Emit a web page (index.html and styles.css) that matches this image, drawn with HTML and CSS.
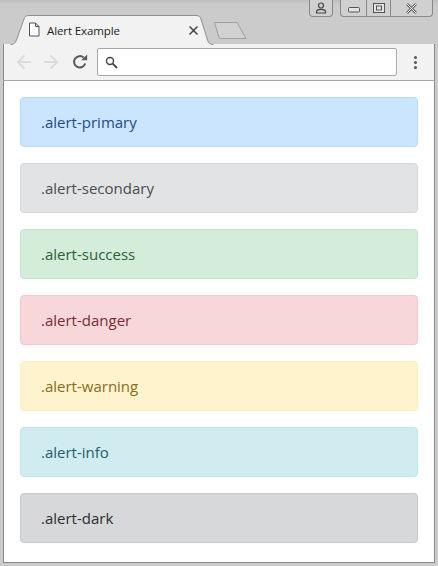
FILE: index.html
```html
<!DOCTYPE html>
<html lang="en">
<head>
<meta charset="utf-8">
<title>Alert Example</title>
<link rel="stylesheet" href="styles.css">
</head>
<body>
<div class="window">
  <div class="titlebar">
    <div class="tab">
      <svg class="tab-shape" width="204" height="30" viewBox="0 0 204 30"><path d="M0.5 29.5 C4 29.5 5 28 6.5 25 L14 4 C15 1.5 16 0.5 19 0.5 H186 C189 0.5 190 1.5 191 4 L197.5 25 C198.5 28 200 29.5 203.5 29.5" fill="#f2f2f2" stroke="#8f8f8f"/></svg>
      <svg class="tab-page" width="12" height="15" viewBox="0 0 12 15"><path d="M1.5 1 H7.5 L11 4.5 V14 H1.5 Z M7.5 1 V4.5 H11" fill="#fff" stroke="#555" stroke-width="1"/></svg>
      <span class="tab-title">Alert Example</span>
      <svg class="tab-close" width="9" height="9" viewBox="0 0 9 9"><path d="M0.5 0.5 L8.5 8.5 M8.5 0.5 L0.5 8.5" stroke="#444" stroke-width="1.5"/></svg>
    </div>
    <svg class="newtab" width="36" height="18" viewBox="0 0 36 18"><path d="M1.5 0.5 H24 L33 16.5 H8 C7 16.5 6.5 16 6 15.5 Z" fill="#d2d2d2" stroke="#a0a0a0"/></svg>
    <div class="controls">
      <div class="ctl ctl-user">
        <svg width="12" height="12" viewBox="0 0 12 12"><circle cx="6" cy="3.5" r="2.5" fill="none" stroke="#444" stroke-width="1.2"/><path d="M1.5 11 V9.5 C1.5 8 3 7.3 6 7.3 C9 7.3 10.5 8 10.5 9.5 V11 Z" fill="none" stroke="#444" stroke-width="1.2"/></svg>
      </div>
      <div class="ctl-group">
        <div class="ctl ctl-min"><svg width="12" height="6" viewBox="0 0 12 6"><rect x="0.5" y="0.5" width="11" height="4.5" rx="1" fill="#e4e4e4" stroke="#555"/></svg></div>
        <div class="ctl ctl-max"><svg width="12" height="10" viewBox="0 0 12 10"><rect x="0.5" y="0.5" width="11" height="9" fill="#e4e4e4" stroke="#555"/><rect x="3.5" y="3" width="5" height="4" fill="#e4e4e4" stroke="#555"/></svg></div>
        <div class="ctl ctl-close"><svg width="13" height="11" viewBox="0 0 13 11"><path d="M2 1 L11 10 M11 1 L2 10" stroke="#666" stroke-width="2.6"/><path d="M2 1 L11 10 M11 1 L2 10" stroke="#eee" stroke-width="1"/></svg></div>
      </div>
    </div>
  </div>
  <div class="toolbar">
    <svg class="nav" width="15" height="16" viewBox="0 0 15 16"><path d="M15 8 H2 M8.5 1.5 L2 8 L8.5 14.5" fill="none" stroke="#dcdcdc" stroke-width="2"/></svg>
    <svg class="nav" width="15" height="16" viewBox="0 0 15 16"><path d="M0 8 H13 M6.5 1.5 L13 8 L6.5 14.5" fill="none" stroke="#dcdcdc" stroke-width="2"/></svg>
    <svg class="nav" width="16" height="16" viewBox="0 0 16 16"><path d="M13.2 9.5 A5.7 5.7 0 1 1 11.6 3.6" fill="none" stroke="#5a5a5a" stroke-width="2"/><path d="M9.2 6.2 H15.2 V0.4 Z" fill="#5a5a5a"/></svg>
    <div class="omnibox">
      <svg width="13" height="13" viewBox="0 0 13 13"><circle cx="5" cy="5" r="3.5" fill="none" stroke="#444" stroke-width="1.4"/><path d="M7.7 7.7 L12 12" stroke="#444" stroke-width="1.8"/></svg>
    </div>
    <div class="menu"><i></i><i></i><i></i></div>
  </div>
  <main class="page">
    <div class="alert alert-primary">.alert-primary</div>
    <div class="alert alert-secondary">.alert-secondary</div>
    <div class="alert alert-success">.alert-success</div>
    <div class="alert alert-danger">.alert-danger</div>
    <div class="alert alert-warning">.alert-warning</div>
    <div class="alert alert-info">.alert-info</div>
    <div class="alert alert-dark">.alert-dark</div>
  </main>
</div>
</body>
</html>
```
FILE: styles.css
```css
* { box-sizing: border-box; }
html, body { margin: 0; height: 100%; }
body { background: #cbcbcb; overflow: hidden; font-family: "Open Sans", "Noto Sans", sans-serif; }
.window { width: 438px; height: 566px; display: flex; flex-direction: column; padding: 0 3px 3px 3px; }
.titlebar { height: 44px; display: flex; align-items: flex-start; position: relative; flex: none; background: linear-gradient(#bdbdbd 0, #c8c8c8 3px, #cbcbcb 6px); margin: 0 -3px; padding-left: 10px; }
.tab { position: relative; width: 204px; height: 30px; margin-top: 15px; flex: none; display: flex; align-items: center; padding: 0 15px 0 18px; z-index: 1; }
.tab-shape { position: absolute; left: 0; top: 0; }
.tab-page { position: relative; margin-right: 7px; margin-top: -1px; }
.tab-title { position: relative; font: 11.5px "Open Sans", sans-serif; color: #222; flex: 1; letter-spacing: -0.1px; }
.tab-close { position: relative; margin-right: 1px; }
.newtab { margin-top: 22px; margin-left: -1px; flex: none; }
.controls { display: flex; margin-left: auto; align-items: flex-start; padding-right: 5px; gap: 7px; }
.ctl { height: 17px; display: flex; align-items: center; justify-content: center; }
.ctl-user { width: 24px; border: 1px solid #8a8a8a; border-top: 0; border-radius: 0 0 4px 4px; background: #d0d0d0; }
.ctl-group { display: flex; border: 1px solid #8a8a8a; border-top: 0; border-radius: 0 0 4px 4px; background: #d0d0d0; height: 17px; }
.ctl-min { width: 26px; padding-top: 3px; height: 16px; border-right: 1px solid #8a8a8a; }
.ctl-max { width: 24px; height: 16px; border-right: 1px solid #8a8a8a; }
.ctl-close { width: 41px; height: 16px; }
.toolbar { height: 38px; flex: none; background: #f2f2f2; border-left: 1px solid #8a8a8a; border-right: 1px solid #8a8a8a; border-top: 1px solid #9a9a9a; border-bottom: 1px solid #a8a8a8; display: flex; align-items: center; padding: 0 0 0 12px; margin-top: -1px; }
.nav { margin-right: 13px; flex: none; }
.nav:nth-child(3) { margin-right: 9px; }
.omnibox { width: 300px; height: 28px; flex: none; background: #fff; border: 1px solid #a8a8a8; border-radius: 2px; display: flex; align-items: center; padding-left: 7px; }
.menu { flex: 1; display: flex; flex-direction: column; align-items: center; gap: 2px; }
.menu i { width: 3px; height: 3px; border-radius: 50%; background: #555; display: block; }
.page { flex: 1; background: #fff; border-left: 1px solid #8a8a8a; border-right: 1px solid #8a8a8a; border-bottom: 1px solid #8a8a8a; padding: 16px 16px 0 16px; display: flex; flex-direction: column; gap: 16px; }
.alert { height: 50px; flex: none; border: 1px solid; border-radius: 4px; padding: 0 20px; display: flex; align-items: center; font-size: 15px; line-height: 24px; }
.alert-primary { color: #1c4c85; background: #cce5ff; border-color: #b8daff; }
.alert-secondary { color: #484c50; background: #e2e3e5; border-color: #d6d8db; }
.alert-success { color: #2a6236; background: #d4edda; border-color: #c3e6cb; }
.alert-danger { color: #772d33; background: #f8d7da; border-color: #f5c6cb; }
.alert-warning { color: #856c1e; background: #fff3cd; border-color: #ffeeba; }
.alert-info { color: #1f5e69; background: #d1ecf1; border-color: #bee5eb; }
.alert-dark { color: #2b2e31; background: #d6d8d9; border-color: #c6c8ca; }
```
